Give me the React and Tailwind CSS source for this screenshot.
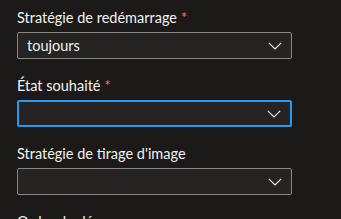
const fields = [
  { label: "Stratégie de redémarrage", required: true, value: "toujours" },
  { label: "État souhaité", required: true, value: "", focused: true },
  { label: "Stratégie de tirage d'image", required: false, value: "" },
];

function Chevron() {
  return (
    <svg width="14" height="8" viewBox="0 0 14 8" fill="none" className="text-[#f3f2f1]">
      <path d="M0.8 0.8 L7 7 L13.2 0.8" stroke="currentColor" strokeWidth="1.2" />
    </svg>
  );
}

function Field({ label, required, value, focused }) {
  return (
    <div className="flex flex-col gap-[4px] pb-[17px]">
      <label className="h-[20px] leading-[20px] text-[14.5px] text-[#f3f2f1]">
        {label}
        {required && <span className="ml-[4px] text-[#f1707b]">*</span>}
      </label>
      <div
        className={`w-[275px] h-[27px] flex items-center justify-between bg-[#252423] rounded-[2px] pl-[9px] pr-[9px] ${
          focused ? "border-2 border-[#2899f5]" : "border border-[#8a8886]"
        }`}
      >
        <span className="text-[14.5px] text-[#f3f2f1]">{value}</span>
        <Chevron />
      </div>
    </div>
  );
}

export default function App() {
  return (
    <div
      className="w-[341px] h-[219px] overflow-hidden bg-[#1b1a19] pt-[8px] pl-[17px]"
      style={{ fontFamily: "'Segoe UI', Lato, sans-serif" }}
    >
      {fields.map((f) => (
        <Field key={f.label} {...f} />
      ))}
      <div className="h-[20px] leading-[20px] text-[14.5px] text-[#f3f2f1]">
        Ordre de démarrage
      </div>
    </div>
  );
}
